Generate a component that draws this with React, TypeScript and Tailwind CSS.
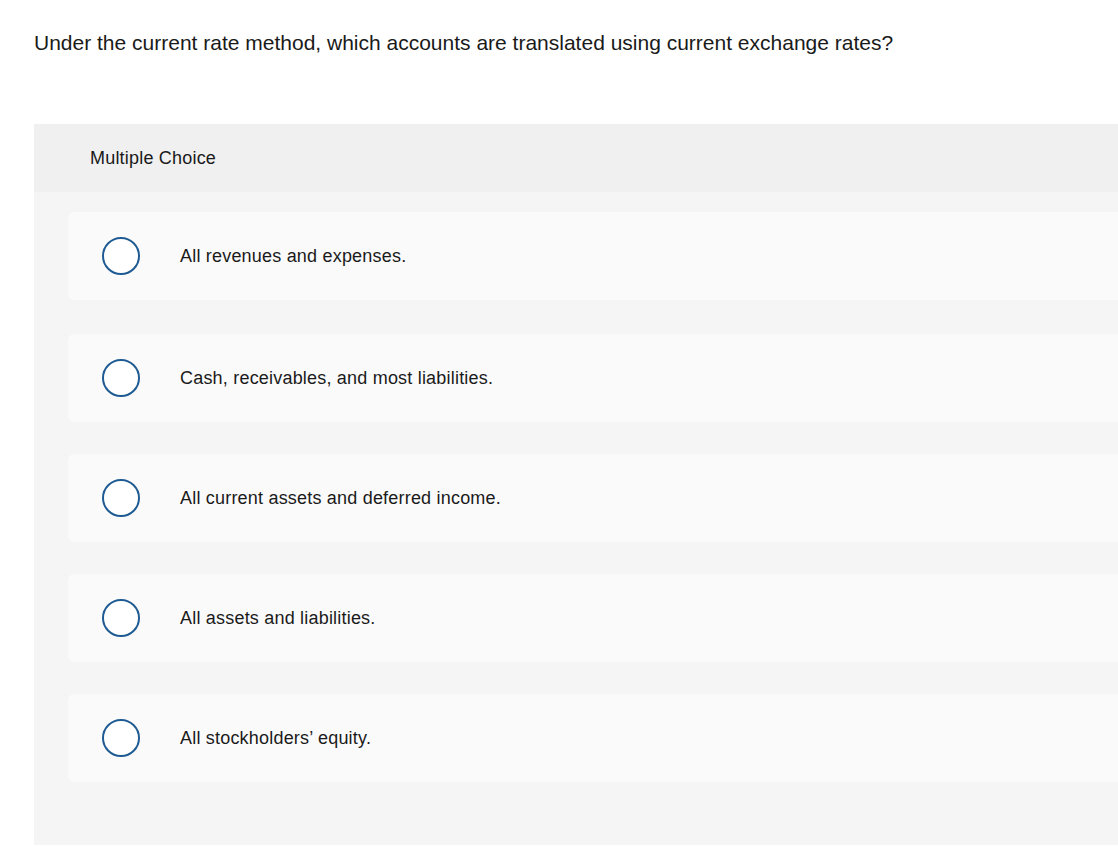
const options = [
  'All revenues and expenses.',
  'Cash, receivables, and most liabilities.',
  'All current assets and deferred income.',
  'All assets and liabilities.',
  'All stockholders\u2019 equity.',
];

export default function App() {
  return (
    <div className="w-[1118px] h-[846px] overflow-hidden bg-white text-[#1a1a1a] font-['Liberation_Sans',Arial,sans-serif]">
      {/* Question */}
      <p className="pl-[34px] pt-[30px] text-[21px] leading-[26px]">
        Under the current rate method, which accounts are translated using current exchange rates?
      </p>

      {/* Choices panel */}
      <div className="ml-[34px] mt-[68px] w-[1100px] h-[721px] bg-[#f5f5f5]">
        <div className="h-[68px] bg-[#f0f0f0] pl-[56px] flex items-center text-[18px] tracking-[0.2px]">
          Multiple Choice
        </div>

        <div className="flex flex-col gap-[32px] pt-[20px] pl-[34px]">
          {options.map((label) => (
            <div
              key={label}
              className="h-[88px] first:mb-[2px] bg-[#fafafa] rounded-l-[6px] flex items-center pl-[34px]"
            >
              <span className="w-[38px] h-[38px] rounded-full border-[2.5px] border-[#1f5b93] bg-white shrink-0" />
              <span className="ml-[40px] text-[18px] tracking-[0.2px]">{label}</span>
            </div>
          ))}
        </div>
      </div>
    </div>
  );
}
